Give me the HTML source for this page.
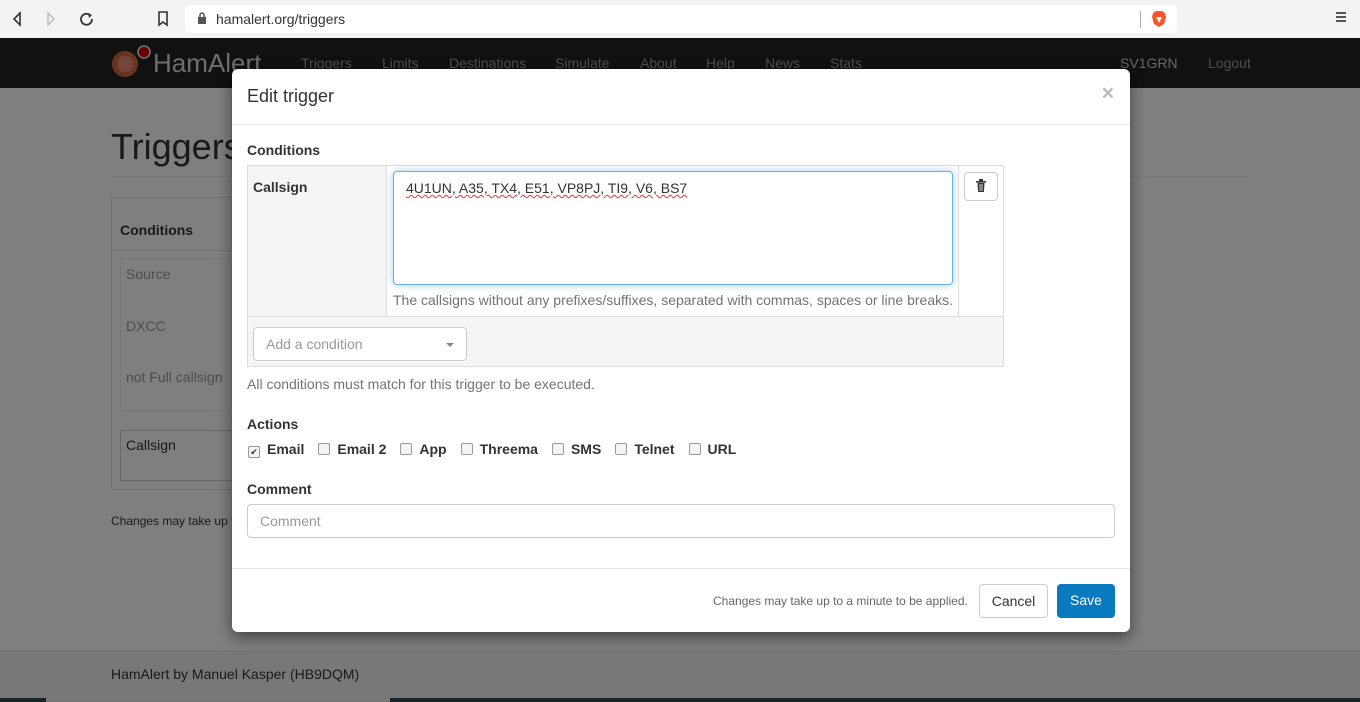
<!DOCTYPE html>
<html><head><style>
*{box-sizing:border-box;margin:0;padding:0}
body{width:1360px;height:702px;overflow:hidden;font-family:"Liberation Sans",Arial,sans-serif;font-size:14px;color:#333;background:#fff;position:relative}
.abs{position:absolute}
.chrome{left:0;top:0;width:1360px;height:38px;background:#f3f3f3}
.url{left:185px;top:5px;width:992px;height:28px;background:#fff;border-radius:6px}
.nav{left:0;top:38px;width:1360px;height:50px;background:#222}
.nav span{position:absolute;top:17px;color:#9d9d9d;font-size:14px}
.ov{left:0;top:38px;width:1360px;height:664px;background:rgba(0,0,0,.5)}
.modal{left:232px;top:69px;width:898px;height:563px;background:#fff;border-radius:6px;box-shadow:0 5px 15px rgba(0,0,0,.5)}
.cb{display:inline-block;width:12px;height:12px;border:1px solid #999;border-radius:2px;background:#f4f4f4;vertical-align:-1px;margin-right:7px}
.act span.l{font-weight:bold;margin-right:14px}
</style></head><body>
<div class="abs chrome"></div>
<svg class="abs" style="left:12px;top:11px" width="90" height="16"><path d="M8 2L2 8l6 6z" fill="none" stroke="#333" stroke-width="1.6"/><path d="M36 2l6 6-6 6z" fill="none" stroke="#bbb" stroke-width="1.4"/><path d="M78 4a5.5 5.5 0 1 0 2 4" fill="none" stroke="#333" stroke-width="1.8"/><path d="M76 2l4 2-3 3" fill="#333"/></svg>
<svg class="abs" style="left:157px;top:11px" width="12" height="16"><path d="M2 1h8v13l-4-3-4 3z" fill="none" stroke="#333" stroke-width="1.6"/></svg>
<div class="abs url"></div>
<svg class="abs" style="left:197px;top:12px" width="10" height="13"><rect x="1" y="5" width="8" height="7" fill="#555"/><path d="M3 5V3a2 2 0 0 1 4 0v2" fill="none" stroke="#555" stroke-width="1.5"/></svg>
<div class="abs" style="left:216px;top:11px;font-size:14px;color:#333">hamalert.org/triggers</div>
<div class="abs" style="left:1140px;top:11px;width:1px;height:17px;background:#aaa"></div>
<svg class="abs" style="left:1151px;top:10px" width="16" height="18"><path d="M2 3l3-2h6l3 2 1 4-2 7-5 3-5-3-2-7z" fill="#fb542b"/><path d="M5 7h6l-3 6z" fill="#fff"/></svg>
<div class="abs" style="left:1336px;top:12px;width:10px;height:2px;background:#555;box-shadow:0 4px #555,0 8px #555"></div>

<div class="abs nav">
<svg class="abs" style="left:110px;top:6px" width="42" height="36"><circle cx="15" cy="20" r="13" fill="#d2693c"/><circle cx="15" cy="20" r="8" fill="#e88a7a"/><circle cx="34" cy="8" r="6" fill="#c00" stroke="#eee" stroke-width="1.5"/></svg>
<span style="left:153px;top:10px;font-size:26px;color:#ddd">HamAlert</span>
<span style="left:301px">Triggers</span><span style="left:382px">Limits</span><span style="left:449px">Destinations</span><span style="left:555px">Simulate</span><span style="left:640px">About</span><span style="left:706px">Help</span><span style="left:765px">News</span><span style="left:830px">Stats</span>
<span style="left:1120px;color:#ccc">SV1GRN</span><span style="left:1208px">Logout</span>
</div>
<div class="abs" style="left:111px;top:126px;font-size:36px;color:#333">Triggers</div>
<div class="abs" style="left:111px;top:176px;width:1140px;height:1px;background:#eee"></div>
<div class="abs" style="left:111px;top:197px;width:400px;height:293px;border:1px solid #ddd"></div>
<div class="abs" style="left:111px;top:250px;width:400px;height:1px;background:#ddd"></div>
<div class="abs" style="left:120px;top:222px;font-weight:bold">Conditions</div>
<div class="abs" style="left:120px;top:258px;width:300px;height:153px;border:1px solid #eee"></div>
<div class="abs" style="left:126px;top:266px;color:#999">Source</div>
<div class="abs" style="left:126px;top:318px;color:#999">DXCC</div>
<div class="abs" style="left:126px;top:369px;color:#999">not Full callsign</div>
<div class="abs" style="left:120px;top:430px;width:300px;height:51px;border:1px solid #ccc"></div>
<div class="abs" style="left:126px;top:437px">Callsign</div>
<div class="abs" style="left:111px;top:514px;font-size:12px">Changes may take up to a minute to be applied.</div>
<div class="abs" style="left:0;top:650px;width:1360px;height:48px;background:#f0f0f0"></div>
<div class="abs" style="left:111px;top:666px">HamAlert by Manuel Kasper (HB9DQM)</div>
<div class="abs" style="left:0;top:698px;width:1360px;height:4px;background:#2a4a50"></div>
<div class="abs" style="left:46px;top:698px;width:344px;height:4px;background:#eee"></div>
<div class="abs ov"></div>

<div class="abs modal">
<div class="abs" style="left:15px;top:17px;font-size:18px">Edit trigger</div>
<div class="abs" style="right:16px;top:13px;font-size:21px;font-weight:bold;color:#bbb">×</div>
<div class="abs" style="left:0;top:55px;width:898px;height:1px;background:#e5e5e5"></div>
<div class="abs" style="left:15px;top:73px;font-weight:bold">Conditions</div>
<div class="abs" style="left:15px;top:96px;width:757px;height:202px;border:1px solid #ddd"></div>
<div class="abs" style="left:16px;top:97px;width:139px;height:150px;background:#f5f5f5;border-right:1px solid #ddd"></div>
<div class="abs" style="left:726px;top:97px;width:1px;height:150px;background:#ddd"></div>
<div class="abs" style="left:16px;top:247px;width:755px;height:50px;background:#f5f5f5;border-top:1px solid #ddd"></div>
<div class="abs" style="left:21px;top:110px;font-weight:bold">Callsign</div>
<div class="abs" style="left:161px;top:102px;width:560px;height:114px;border:1px solid #66afe9;border-radius:4px;box-shadow:0 0 8px rgba(102,175,233,.6)"></div>
<div class="abs" style="left:174px;top:111px;font-size:14px;text-decoration:underline wavy #e33;text-decoration-thickness:1px">4U1UN, A35, TX4, E51, VP8PJ, TI9, V6, BS7</div>
<div class="abs" style="left:161px;top:223px;color:#737373">The callsigns without any prefixes/suffixes, separated with commas, spaces or line breaks.</div>
<div class="abs" style="left:732px;top:103px;width:34px;height:29px;border:1px solid #ccc;border-radius:4px;text-align:center;padding-top:6px">
<svg width="10" height="13"><rect x="0" y="2" width="10" height="1.6" fill="#333"/><rect x="3" y="0" width="4" height="2" fill="#333"/><path d="M1.5 4h7l-.6 9h-5.8z" fill="#333"/><path d="M4 5v7M6 5v7" stroke="#fff" stroke-width=".8"/></svg></div>
<div class="abs" style="left:21px;top:258px;width:214px;height:34px;border:1px solid #ccc;border-radius:4px;background:#fff"><span class="abs" style="left:12px;top:8px;color:#999">Add a condition</span><span class="abs" style="left:192px;top:15px;border:4px solid transparent;border-top-color:#888;border-bottom:0"></span></div>
<div class="abs" style="left:15px;top:307px;color:#737373">All conditions must match for this trigger to be executed.</div>
<div class="abs" style="left:15px;top:347px;font-weight:bold">Actions</div>
<div class="abs act" style="left:16px;top:372px;white-space:nowrap"><span class="cb" style="text-align:center;font-size:9px;line-height:10px">✔</span><span class="l">Email</span><span class="cb"></span><span class="l">Email 2</span><span class="cb"></span><span class="l">App</span><span class="cb"></span><span class="l">Threema</span><span class="cb"></span><span class="l">SMS</span><span class="cb"></span><span class="l">Telnet</span><span class="cb"></span><span class="l">URL</span></div>
<div class="abs" style="left:15px;top:412px;font-weight:bold">Comment</div>
<div class="abs" style="left:15px;top:435px;width:868px;height:34px;border:1px solid #ccc;border-radius:4px"><span class="abs" style="left:12px;top:8px;color:#999">Comment</span></div>
<div class="abs" style="left:0;top:499px;width:898px;height:1px;background:#e5e5e5"></div>
<div class="abs" style="left:481px;top:525px;font-size:12px;color:#666">Changes may take up to a minute to be applied.</div>
<div class="abs" style="left:747px;top:515px;width:69px;height:34px;border:1px solid #ccc;border-radius:4px;text-align:center;padding-top:8px">Cancel</div>
<div class="abs" style="left:825px;top:515px;width:58px;height:34px;background:#0a7abf;border-radius:4px;color:#fff;text-align:center;padding-top:8px">Save</div>
</div>
</body></html>
